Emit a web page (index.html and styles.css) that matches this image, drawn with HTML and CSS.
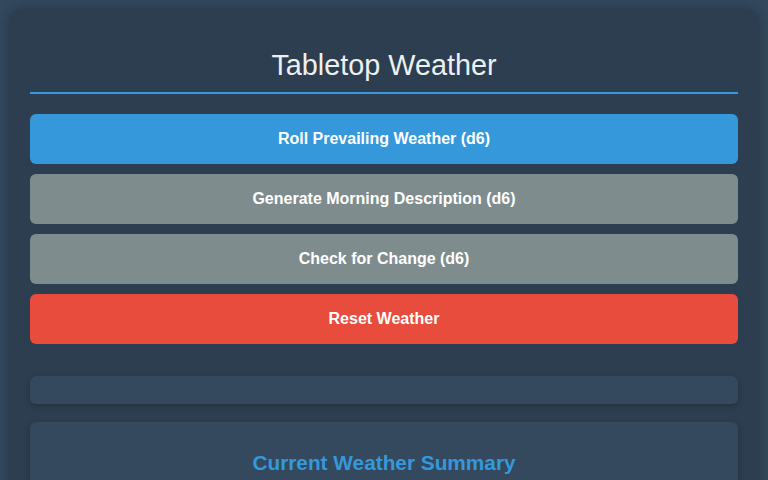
FILE: index.html
```html
<!DOCTYPE html>
<html lang="en">
<head>
<meta charset="utf-8">
<title>Tabletop Weather</title>
<link rel="stylesheet" href="styles.css">
</head>
<body>
<div class="container">
  <h1 class="title">Tabletop Weather</h1>
  <div class="actions">
    <button class="btn btn-primary">Roll Prevailing Weather (d6)</button>
    <button class="btn btn-secondary">Generate Morning Description (d6)</button>
    <button class="btn btn-secondary">Check for Change (d6)</button>
    <button class="btn btn-danger">Reset Weather</button>
  </div>
  <div class="result"></div>
  <div class="summary">
    <h2 class="summary-title">Current Weather Summary</h2>
  </div>
</div>
</body>
</html>
```

FILE: styles.css
```css
* { box-sizing: border-box; }
html, body { margin: 0; padding: 0; }
body {
  background: #34495e;
  font-family: "Liberation Sans", Arial, sans-serif;
  color: #ecf0f1;
  padding: 10px;
  height: 480px;
  overflow: hidden;
}
.container {
  background: #2c3e50;
  border-radius: 10px;
  padding: 20px;
  box-shadow: 0 0 15px rgba(0, 0, 0, 0.3);
  min-height: 600px;
}
.title {
  margin: 20px 0 20px;
  padding-bottom: 12px;
  border-bottom: 2px solid #3498db;
  font-size: 28.8px;
  font-weight: normal;
  line-height: 30px;
  text-align: center;
  color: #ecf0f1;
}
.actions {
  display: flex;
  flex-direction: column;
  gap: 10px;
}
.btn {
  display: block;
  width: 100%;
  border: none;
  border-radius: 6px;
  padding: 15px;
  font-family: "Liberation Sans", Arial, sans-serif;
  font-size: 16px;
  font-weight: bold;
  line-height: 20px;
  color: #ffffff;
  text-align: center;
}
.btn-primary { background: #3498db; }
.btn-secondary { background: #7f8c8d; }
.btn-danger { background: #e74c3c; }
.result {
  margin-top: 32px;
  height: 28px;
  background: #34495e;
  border-radius: 6px;
  box-shadow: 0 2px 6px rgba(0, 0, 0, 0.2);
}
.summary {
  margin-top: 18px;
  background: #34495e;
  border-radius: 6px;
  padding: 20px;
  min-height: 200px;
  box-shadow: 0 2px 6px rgba(0, 0, 0, 0.2);
}
.summary-title {
  margin: 9px 0 0;
  font-size: 20.8px;
  line-height: 23px;
  font-weight: bold;
  color: #3498db;
  text-align: center;
}
```
